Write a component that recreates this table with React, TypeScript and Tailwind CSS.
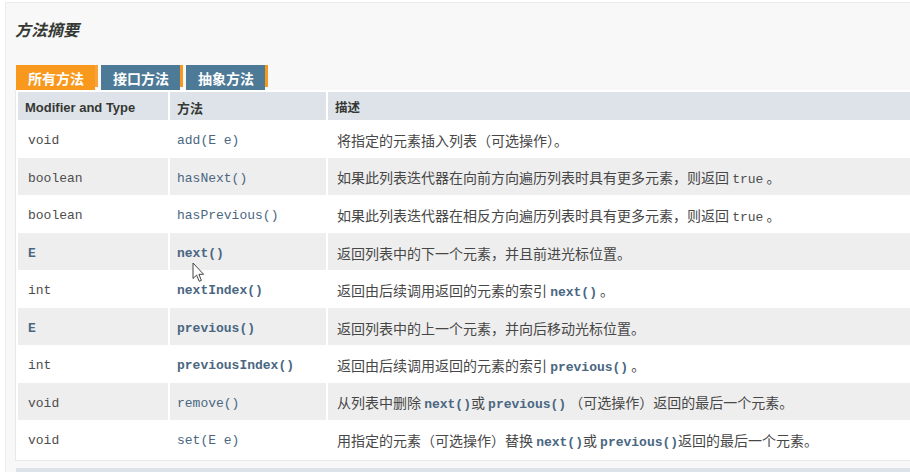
import type { ReactNode } from 'react'

const cjk = { fontFamily: '"Noto Sans CJK SC", "Noto Sans", sans-serif' }
const mono = { fontFamily: '"Liberation Mono", "Noto Sans CJK SC", monospace' }
const sans = { fontFamily: '"Liberation Sans", "Noto Sans CJK SC", sans-serif' }

function Lnk({ children }: { children: ReactNode }) {
  return (
    <span className="font-bold text-[#4a6782] text-[13px]" style={mono}>
      {children}
    </span>
  )
}

function Code({ children }: { children: ReactNode }) {
  return (
    <span className="text-[#4d4d4d] text-[13px]" style={mono}>
      {children}
    </span>
  )
}

interface MethodRow {
  type: string
  typeLink?: boolean
  name: string
  args: string
  bold?: boolean
  desc: ReactNode
}

const rows: MethodRow[] = [
  { type: 'void', name: 'add', args: '(E e)', desc: <>将指定的元素插入列表（可选操作）。</> },
  {
    type: 'boolean',
    name: 'hasNext',
    args: '()',
    desc: <>如果此列表迭代器在向前方向遍历列表时具有更多元素，则返回 <Code>true</Code> 。</>,
  },
  {
    type: 'boolean',
    name: 'hasPrevious',
    args: '()',
    desc: <>如果此列表迭代器在相反方向遍历列表时具有更多元素，则返回 <Code>true</Code> 。</>,
  },
  { type: 'E', typeLink: true, name: 'next', args: '()', bold: true, desc: <>返回列表中的下一个元素，并且前进光标位置。</> },
  {
    type: 'int',
    name: 'nextIndex',
    args: '()',
    bold: true,
    desc: <>返回由后续调用返回的元素的索引 <Lnk>next()</Lnk> 。</>,
  },
  { type: 'E', typeLink: true, name: 'previous', args: '()', bold: true, desc: <>返回列表中的上一个元素，并向后移动光标位置。</> },
  {
    type: 'int',
    name: 'previousIndex',
    args: '()',
    bold: true,
    desc: <>返回由后续调用返回的元素的索引 <Lnk>previous()</Lnk> 。</>,
  },
  {
    type: 'void',
    name: 'remove',
    args: '()',
    desc: <>从列表中删除 <Lnk>next()</Lnk>或 <Lnk>previous()</Lnk> （可选操作）返回的最后一个元素。</>,
  },
  {
    type: 'void',
    name: 'set',
    args: '(E e)',
    desc: <>用指定的元素（可选操作）替换 <Lnk>next()</Lnk>或 <Lnk>previous()</Lnk>返回的最后一个元素。</>,
  },
]

function Tab({ label, active }: { label: string; active?: boolean }) {
  return (
    <div className="flex h-[25px]">
      <div
        className={`flex items-center pt-[2px] pl-[12px] pr-[11px] text-[14px] font-bold text-white ${
          active ? 'bg-[#f8981d]' : 'bg-[#4d7a97]'
        }`}
        style={cjk}
      >
        {label}
      </div>
      <div className={`w-[3px] h-[22px] ${active ? 'bg-[#f9a23a]' : 'bg-[#f8981d]'}`} />
    </div>
  )
}

export default function App() {
  return (
    <div className="relative w-[910px] h-[472px] overflow-hidden bg-white">
      <div className="ml-[5px] mt-[2px] w-[960px] h-[480px] bg-[#f8f8f8] border border-[#ececec] pl-[9px]">
        <div className="pt-[16px] h-[62px] text-[16px] leading-[20px] font-bold italic text-[#353833]" style={cjk}>
          方法摘要
        </div>

        <div className="flex gap-[3px] ml-[1px]">
          <Tab label="所有方法" active />
          <Tab label="接口方法" />
          <Tab label="抽象方法" />
        </div>

        <div className="bg-white border border-[#e8e8e8] border-t-0 p-[2px] pr-0">
          <div className="grid grid-cols-[150px_156px_1fr] gap-x-[2px]">
            <div className="h-[28px] flex items-center pt-[3px] pl-[7px] bg-[#dee3e9] text-[13px] font-bold text-[#353833]" style={sans}>
              Modifier and Type
            </div>
            <div className="h-[28px] flex items-center pt-[3px] pl-[7px] bg-[#dee3e9] text-[13px] font-bold text-[#353833]" style={cjk}>
              方法
            </div>
            <div className="h-[28px] flex items-center pt-[3px] pl-[7px] bg-[#dee3e9] text-[12.5px] font-bold text-[#353833]" style={cjk}>
              描述
            </div>

            {rows.map((r, i) => {
              const bg = i % 2 === 1 ? 'bg-[#eeeeee]' : 'bg-white'
              return [
                <div key={`t${i}`} className={`h-[37.5px] flex items-center pt-[4px] pl-[10px] ${bg}`}>
                  <span
                    className={`text-[13px] ${r.typeLink ? 'font-bold text-[#4a6782]' : 'text-[#4d4d4d]'}`}
                    style={mono}
                  >
                    {r.type}
                  </span>
                </div>,
                <div key={`m${i}`} className={`h-[37.5px] flex items-center pt-[4px] pl-[7px] ${bg}`}>
                  <span className={`text-[13px] text-[#4a6782] ${r.bold ? 'font-bold' : ''}`} style={mono}>
                    {r.name}
                    {r.args}
                  </span>
                </div>,
                <div
                  key={`d${i}`}
                  className={`h-[37.5px] flex items-center pt-[4px] pl-[9px] whitespace-pre text-[14px] text-[#474747] ${bg}`}
                  style={cjk}
                >
                  <span>{r.desc}</span>
                </div>,
              ]
            })}
          </div>
        </div>

        <div className="mt-[7px] h-[20px] bg-[#dee3e9] ml-[1px]" />
      </div>

      {/* mouse pointer */}
      <svg className="absolute left-[192px] top-[262px]" width="13" height="21" viewBox="0 0 13 21">
        <path
          d="M1 1 L1 16.5 L4.6 13.1 L7.2 19.3 L9.4 18.4 L6.9 12.3 L11.6 12.3 Z"
          fill="white"
          stroke="#444"
          strokeWidth="1"
          strokeLinejoin="round"
        />
      </svg>
    </div>
  )
}
